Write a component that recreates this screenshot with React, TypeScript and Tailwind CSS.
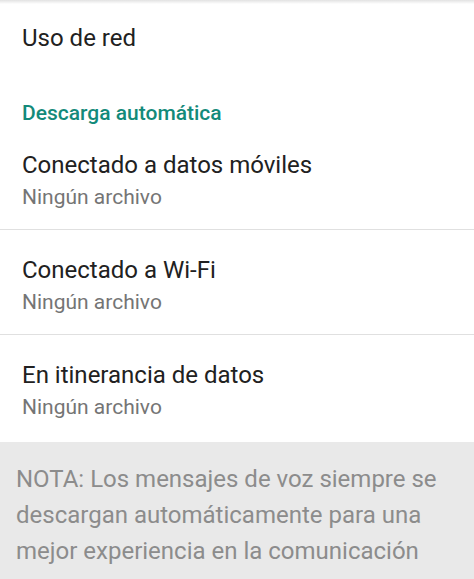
import React from 'react';

const OPTIONS = [
  { title: 'Conectado a datos móviles', value: 'Ningún archivo' },
  { title: 'Conectado a Wi-Fi', value: 'Ningún archivo' },
  { title: 'En itinerancia de datos', value: 'Ningún archivo' },
];

export default function App() {
  return (
    <div className="min-h-screen bg-white flex flex-col" style={{ fontFamily: 'Roboto, "Noto Sans", sans-serif' }}>
      {/* toolbar shadow */}
      <div className="h-[4px] bg-gradient-to-b from-[#e2e2e2] to-white" />

      <div className="pt-[20px] px-[22px]">
        <p className="text-[24px] leading-[28px] text-[#212121]">Uso de red</p>
      </div>

      {/* Section header */}
      <div className="pt-[49px] px-[22px]">
        <p className="text-[21px] leading-[24px] font-medium text-[#138a7a]">Descarga automática</p>
      </div>

      <div className="flex flex-col">
        {OPTIONS.map((opt, i) => (
          <div
            key={opt.title}
            className={`px-[22px] pt-[26px] ${i < OPTIONS.length - 1 ? 'pb-[18px] border-b border-[#e0e0e0]' : 'pb-[21px]'}`}
          >
            <p className="text-[24px] leading-[28px] text-[#212121]">{opt.title}</p>
            <p className="mt-[4px] text-[21px] leading-[28px] text-[#757575]">{opt.value}</p>
          </div>
        ))}
      </div>

      {/* Note */}
      <div className="flex-1 bg-[#e9e9e9] px-[16px] pt-[19px] pb-[20px]">
        <p className="text-[24px] leading-[36px] text-[#8c8c8c]">
          NOTA: Los mensajes de voz siempre se descargan automáticamente para una mejor experiencia en la comunicación
        </p>
      </div>
    </div>
  );
}
